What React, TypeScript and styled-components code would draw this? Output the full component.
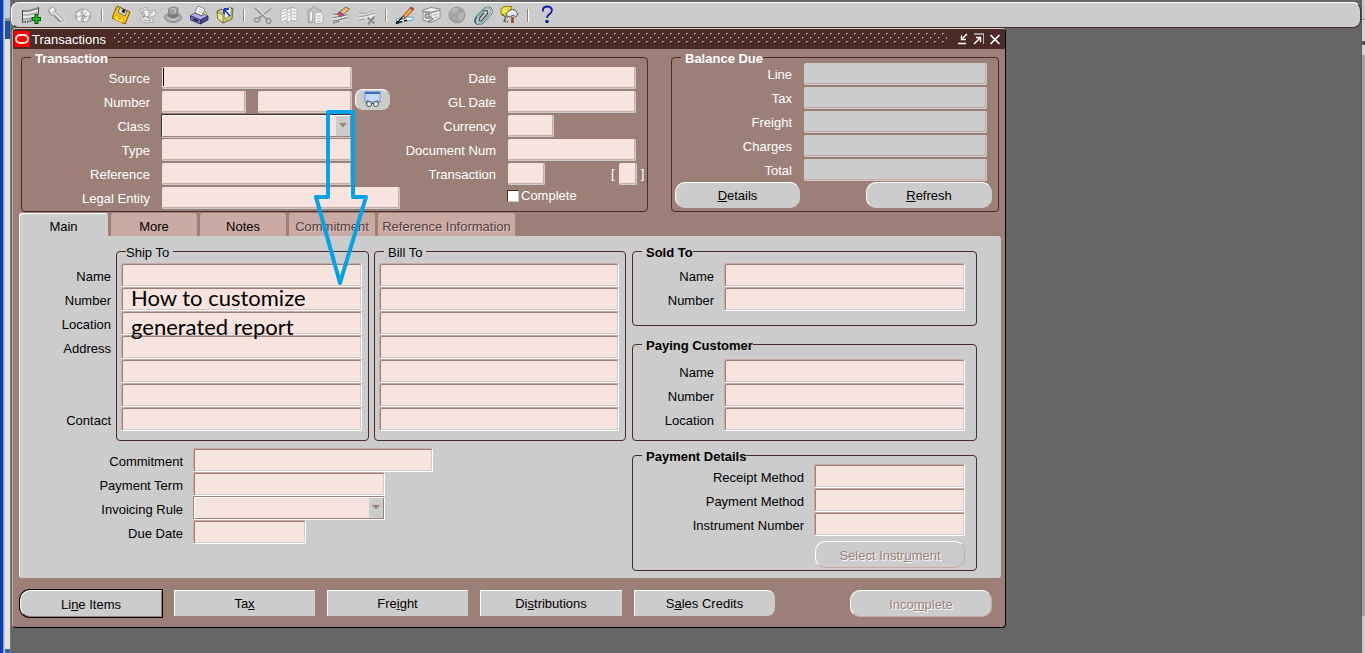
import React from "react";
import styled, { createGlobalStyle, css } from "styled-components";

const c = {
  desk: "#666666",
  brown: "#9c8077",
  dark: "#4a2a25",
  rose: "#ccaaa4",
  pink: "#f8e4de",
  grey: "#cccccc",
};

const GlobalStyle = createGlobalStyle`
  *, *::before, *::after { box-sizing: border-box; }
  body {
    margin: 0;
    background: ${c.desk};
    font: 13px/16px "Liberation Sans", Arial, sans-serif;
    color: #000;
  }
  button, input, select { font: inherit; color: inherit; margin: 0; }
`;

const Desktop = styled.div`
  display: flex;
  min-height: 100vh;
`;

const LeftEdge = styled.div`
  flex: none;
  width: 11px;
  background:
    linear-gradient(90deg, #0a3fb5 3px, #8f9db8 3px 4px, #c4c8d0 4px 5px, transparent 5px 10px, #777 10px),
    linear-gradient(#b9cfe8 18px, #8a9099 18px 21px, #1f4f96 21px 39px, #e4e4e0 39px calc(100% - 4px), #3465a8 calc(100% - 4px));
`;

const RightEdge = styled.div`
  flex: none;
  width: 4px;
  background:
    linear-gradient(90deg, #5c5c5c 1px, transparent 1px),
    linear-gradient(#c8c8c8 19px, #909090 19px 20px, #d2d2d2 20px 41px, #555 41px 45px, #d2d2d2 45px 55px, #a2a2a2 55px calc(100% - 37px), #c8c8c8 calc(100% - 37px));
`;

const Workspace = styled.div`
  flex: 1;
  min-width: 0;
  padding-top: 2px;
`;

const ToolbarBox = styled.div`
  display: flex;
  align-items: center;
  height: 26px;
  padding-left: 6px;
  background: ${c.grey};
  border: 1px solid #fff;
  border-right-color: ${c.dark};
  border-bottom-color: ${c.dark};
  border-radius: 8px;
`;

const ToolButton = styled.button`
  display: flex;
  align-items: center;
  justify-content: center;
  width: 26px;
  height: 24px;
  padding: 0;
  border: 0;
  background: none;

  svg { display: block; width: 20px; height: 20px; }
`;

const Separator = styled.span`
  width: 2px;
  height: 13px;
  margin: 0 5px;
  border-left: 1px solid ${c.brown};
  border-right: 1px solid #fff;
`;

const Window = styled.main`
  position: relative;
  width: 994px;
  max-width: 100%;
  margin-left: 1px;
  background: ${c.brown};
  border: 1px solid #000;
  border-top-color: ${c.grey};
  border-left-color: ${c.rose};
  border-radius: 4px;
`;

const TitleBar = styled.header`
  display: flex;
  align-items: center;
  height: 20px;
  padding: 0 4px 0 1px;
  background: ${c.dark};
  border-radius: 3px 3px 0 0;
  color: #fff;
`;

const Title = styled.h1`
  margin: 0 8px 0 2px;
  padding-top: 2px;
  font-size: 13px;
  font-weight: 400;
`;

const Grip = styled.svg`
  flex: 1;
  height: 12px;
  margin-right: 6px;
`;

const WindowButton = styled.button`
  display: flex;
  padding: 0;
  margin-left: 4px;
  border: 0;
  background: none;
  color: #fff;
`;

const TopArea = styled.div`
  display: flex;
  gap: 23px;
  padding: 3px 6px 0 8px;
  color: #fff;
`;

const Group = styled.fieldset<{ $grow?: number; $basis?: number }>`
  min-width: 0;
  margin: 0;
  padding: 0;
  border: 1px solid ${c.dark};
  border-radius: 4px;
  ${(p) => p.$basis && css`flex: ${p.$grow ?? 0} 1 ${p.$basis}px;`}
`;

const Legend = styled.legend<{ $plain?: boolean; $indent?: number }>`
  height: 11px;
  margin-left: 9px;
  padding: 0 ${(p) => (p.$plain ? 4 : 0)}px 0 ${(p) => p.$indent ?? 4}px;
  font-weight: ${(p) => (p.$plain ? 400 : 700)};
  line-height: 13px;
`;

const Columns = styled.div`
  display: flex;
  padding: 4px 0 2px;
`;

const Stack = styled.div<{ $gap?: number; $pad?: string; $grow?: boolean }>`
  display: flex;
  flex-direction: column;
  gap: ${(p) => p.$gap ?? 0}px;
  padding: ${(p) => p.$pad ?? 0};
  ${(p) => p.$grow && css`flex: 1; min-width: 0;`}
`;

const Row = styled.div<{ $label?: number }>`
  display: flex;
  align-items: center;
  gap: 12px;

  > label:first-child {
    flex: ${(p) => (p.$label ? `0 0 ${p.$label}px` : "1")};
    padding-top: 2px;
    text-align: right;
    white-space: nowrap;
  }
`;

const PanelRow = styled(Row)`
  gap: 10px;

  > label:first-child { padding-top: 4px; }
`;

const Field = styled.input<{ $w?: number; $caret?: boolean; $grey?: boolean }>`
  display: block;
  width: ${(p) => (p.$w ? `${p.$w}px` : "100%")};
  min-width: 0;
  height: 22px;
  padding: 0 3px;
  border: 0 solid ${c.grey};
  border-width: 0 1px 1px 0;
  border-radius: 2px;
  box-shadow: inset -1px -1px ${c.rose};
  outline: 0;
  background: ${(p) =>
    p.$caret
      ? `linear-gradient(#000, #000) 1px 1px / 1px 18px no-repeat ${c.pink}`
      : p.$grey
        ? c.grey
        : c.pink};
`;

const SunkenField = styled(Field)`
  height: 24px;
  border: 1px solid;
  border-color: ${c.rose} #fff #fff ${c.rose};
  box-shadow: inset 1px 1px ${c.brown}, inset -1px -1px ${c.grey};
`;

const SelectBox = styled.span<{ $w: number; $active?: boolean }>`
  position: relative;
  display: block;
  width: ${(p) => p.$w}px;
  margin: ${(p) => (p.$active ? "-1px 0 -1px -1px" : "0")};

  svg {
    position: absolute;
    top: 9px;
    right: 5px;
    pointer-events: none;
  }
`;

const Select = styled.select<{ $active?: boolean }>`
  appearance: none;
  display: block;
  width: 100%;
  height: 24px;
  border: 1px solid;
  border-color: ${(p) => (p.$active ? `${c.dark} ${c.grey} ${c.grey} ${c.dark}` : `${c.brown} #fff #fff ${c.brown}`)};
  border-radius: 2px;
  box-shadow: inset 1px 1px #fff, inset -1px -1px ${c.brown};
  outline: 0;
  background: linear-gradient(90deg, ${c.pink} calc(100% - 15px), ${c.grey} calc(100% - 15px));
`;

const LensButton = styled.button`
  display: flex;
  align-items: center;
  justify-content: center;
  width: 35px;
  height: 21px;
  margin: -6px 0 0 -9px;
  padding: 0;
  border: 1px solid ${c.grey};
  border-top-color: #fff;
  border-left-color: #fff;
  border-radius: 8px;
  background: ${c.grey};
`;

const Check = styled.input`
  appearance: none;
  width: 12px;
  height: 12px;
  background: #fff;
  border: 1px solid ${c.grey};
  border-top-color: ${c.dark};
  border-left-color: ${c.dark};
`;

const CheckRow = styled.div`
  display: flex;
  align-items: center;
  gap: 2px;
  height: 18px;
  margin-left: 107px;
`;

const Status = styled.div`
  display: flex;
  align-items: center;
  gap: 4px;
  margin-left: 54px;
`;

const ButtonRow = styled.div`
  display: flex;
  justify-content: space-between;
  padding: 0 6px 3px 3px;
`;

const PushButton = styled.button<{ $w: number; $shape?: "round" | "left" | "right" | "square"; $default?: boolean }>`
  width: ${(p) => p.$w}px;
  min-width: 0;
  height: ${(p) => (p.$default ? 27 : 26)}px;
  padding: 2px 0 0;
  border: 1px solid ${c.grey};
  border-top-color: #fff;
  border-left-color: #fff;
  border-radius: ${(p) =>
    ({ round: "10px", left: "10px 0 0 10px", right: "0 8px 8px 0", square: "0" })[p.$shape ?? "round"]};
  background: ${c.grey};
  color: #000;
  ${(p) => p.$default && css`box-shadow: 0 0 0 1px #000; border-right-color: ${c.brown}; border-bottom-color: ${c.brown};`}

  &:disabled {
    height: 27px;
    color: ${c.brown};
    text-shadow: 1px 1px #fff;
    border-right-color: ${c.rose};
    border-bottom-color: ${c.rose};
  }
`;

const Tabs = styled.div`
  display: flex;
  gap: 3px;
  padding: 1px 0 0 6px;
`;

const Tab = styled.button<{ $w: number; $active?: boolean }>`
  width: ${(p) => p.$w}px;
  height: 23px;
  padding: 4px 0 0;
  border: 0;
  border-radius: 3px 3px 0 0;
  background: ${(p) => (p.$active ? c.grey : c.rose)};
  ${(p) => p.$active && css`box-shadow: inset 1px 1px #fff;`}
  line-height: 16px;
  white-space: nowrap;

  &:disabled {
    color: #5c3a34;
    text-shadow: 1px 1px ${c.grey};
  }
`;

const Panel = styled.section`
  display: flex;
  gap: 6px;
  margin: 0 4px 0 6px;
  padding: 10px 24px 7px 0;
  background: ${c.grey};
  border-left: 1px solid #fff;
  border-radius: 0 3px 3px 3px;
`;

const Addresses = styled.div`
  display: flex;
  gap: 5px;
`;

const AddressLabels = styled.div`
  display: grid;
  grid-auto-rows: 24px;
  width: 91px;
  padding-top: 19px;
  align-items: center;
  text-align: right;
`;

const Footer = styled.footer`
  display: flex;
  gap: 12px;
  padding: 12px 13px 10px 7px;

  > :last-child { margin-left: auto; }
`;

const Arrow = styled.svg`
  position: absolute;
  left: 300px;
  top: 80px;
  pointer-events: none;
`;

const Note = styled.p`
  position: absolute;
  left: 118px;
  top: 254px;
  margin: 0;
  font: 22px/29px Lato, sans-serif;
  pointer-events: none;
`;

const SideColumn = styled.div`
  flex: 0 1 345px;
  display: flex;
  flex-direction: column;
`;

const Spacer = styled.div<{ $h: number }>`
  height: ${(p) => p.$h}px;
`;

const InstrumentRow = styled.div`
  display: flex;
  justify-content: flex-end;
  padding-top: 5px;
`;

const DownMark = () => (
  <svg width="8" height="5" viewBox="0 0 8 5" aria-hidden="true">
    <path d="M0 0h8L4 4.5z" fill={c.brown} />
  </svg>
);

const icons: Record<string, React.ReactNode> = {
  New: (
    <>
      <path d="M1 5h6l4-1 7-2v10l-6 2-5 1H1z" fill="#e6e6e6" />
      <path d="M1 6h6l4-1 7-2" stroke="#888" strokeWidth="2" fill="none" />
      <path d="M2 10h5l4-1 6-1.500" stroke="#aaa" strokeWidth="1.500" fill="none" />
      <path d="M1 14h6l4-1" stroke="#999" strokeWidth="1.500" fill="none" />
      <path d="M1 17h5l5-1.500" stroke="#333" strokeWidth="1.500" strokeDasharray="1.500 1" fill="none" />
      <path d="M1.500 5v12M17.500 2v7" stroke="#444" />
      <path d="M15.500 9v10M10.500 14h9.500" stroke="#06500a" strokeWidth="4" />
      <path d="M15.500 10v8M11.500 14h7.500" stroke="#15c41c" strokeWidth="2" />
    </>
  ),
  Find: (
    <>
      <path d="M1.500 5l4-3.500L9 4.500l-.5 3 8 7.500-3 3L6 10.500l-3-1z" fill="#d2d2d2" stroke="#969696" />
      <path d="M3 5l3-2.500 1.500 1.500L4 7z" fill="#fafafa" />
      <path d="M7 10l7 7" stroke="#8e8e8e" strokeWidth="1.400" />
      <path d="M8 8.500l7 7" stroke="#f2f2f2" strokeWidth="1.200" />
      <path d="M11 18h6l1-3" stroke="#dedac0" strokeWidth="1.500" fill="none" />
    </>
  ),
  Navigator: (
    <>
      <ellipse cx="10" cy="10.500" rx="8" ry="6.500" fill="#b8b8b8" stroke="#a6a6a6" />
      <path d="M3 9.500L8 5l1 4-3 2zM11 4.500l5 2.500 1 3-5 1-2-2zM4 12.500l5-1-1 5-3-1zM11 12.500l5-1-2 4-3 1z" fill="#f6f6f6" />
      <path d="M7 6l3 4-2 5M13 7l-2 4 2 3" stroke="#9a9a9a" fill="none" />
    </>
  ),
  Save: (
    <>
      <path d="M6 1l13 6-5 12L1 13z" fill="#f9c61c" stroke="#7a5500" />
      <path d="M9 2.500l7 3.500-2 5-7-3.500z" fill="#d8d8d8" stroke="#555" strokeWidth=".8" />
      <path d="M12 4l2.500 1.300-1.400 3-2.500-1.300z" fill="#222" />
      <path d="M5 10l8 4-2 4-8-4z" fill="#ffe63c" stroke="#dd8500" strokeWidth=".8" />
      <path d="M7 13l3 1.500" stroke="#b97a30" />
    </>
  ),
  "Next Step": (
    <>
      <path d="M2 5l7-3 2 4 7-1 1 5-5 2 3 5-8 1-6-4 3-3z" fill="#eee" stroke="#a8a8a8" />
      <path d="M4 6.500l5-2M5 11l5 1 4-3M7 15l6 1M11 8l5-1M8 9l-2 5M12 13l2 3" stroke="#999" fill="none" />
      <circle cx="6" cy="8" r="1.500" fill="#aaa" />
      <circle cx="12" cy="12.500" r="1.500" fill="#aaa" />
    </>
  ),
  "Switch Responsibility": (
    <>
      <ellipse cx="10" cy="12.500" rx="8.500" ry="5" fill="#a6a6a6" stroke="#8a8a8a" />
      <path d="M5.500 4Q10 .5 15 3.500V11q-5 4-9.500 0z" fill="#9a9a9a" stroke="#868686" />
      <path d="M7 5q3-2.500 5-1v4M4 12q6 5.500 12.500 0" stroke="#dadada" fill="none" />
      <path d="M5 8q5 3.500 10 0v3q-5 3.500-10 0z" fill="#7c7c7c" />
    </>
  ),
  Print: (
    <>
      <path d="M9 1l7 3-3 7-7-3z" fill="#fff" stroke="#777" strokeWidth=".8" />
      <path d="M10 4l4 1.500M9 6l4 1.500" stroke="#aaa" strokeWidth=".8" />
      <path d="M1.500 10.500L6 8l6 3 4-2 3 2-7.500 4z" fill="#b4b4e4" stroke="#44447c" strokeWidth=".8" />
      <path d="M1.500 11l10 4v4l-10-4z" fill="#7c7cc4" stroke="#22224c" strokeWidth=".8" />
      <path d="M11.500 15l7.500-4v4l-7.500 4z" fill="#4a4a94" stroke="#22224c" strokeWidth=".8" />
      <path d="M4 14l5 2" stroke="#151540" strokeWidth="1.500" />
      <path d="M14 7l4 1-1 2-3-1z" fill="#ece58a" stroke="#77712c" strokeWidth=".6" />
    </>
  ),
  "Close Form": (
    <>
      <path d="M2 6l5-2 2 2 9-3-1 11-9 4-5-4z" fill="#cfc768" stroke="#716b28" />
      <path d="M2 7l6 3v8l-5-4z" fill="#f0eba4" stroke="#716b28" strokeWidth=".8" />
      <path d="M9 5l7-3v8l-6 4z" fill="#fff" stroke="#555" strokeWidth=".6" />
      <path d="M9 4l6 7M9 4v5M9 4h5" stroke="#1a3bdc" strokeWidth="1.800" fill="none" />
    </>
  ),
  Cut: (
    <>
      <path d="M2 3l12 11M18 3L6 13" stroke="#919191" strokeWidth="1.800" />
      <path d="M3 2.500l11 10M17 3l-9 7" stroke="#f0f0f0" strokeWidth=".8" />
      <ellipse cx="4" cy="15" rx="2.800" ry="2" fill="none" stroke="#919191" strokeWidth="1.300" />
      <ellipse cx="15.500" cy="16" rx="2.300" ry="2.500" fill="none" stroke="#919191" strokeWidth="1.300" />
    </>
  ),
  Copy: (
    <>
      <path d="M2 5l4-2 3 1v12l-3-.5-4 2z" fill="#f4f4f4" stroke="#aaa" strokeWidth=".8" />
      <path d="M8 5l4-2.500 6 1V16l-6-.5L8 18z" fill="#f4f4f4" stroke="#a2a2a2" strokeWidth=".8" />
      <path d="M3.500 7l3-1.500M3.500 10l3-1.500M3.500 13l3-1.500M12 3v12M13.500 6l3 .5M13.500 9l3 .5M13.500 12l3 .5M9.500 7.500l1.500-1M9.500 11l1.500-1" stroke="#b0b0b0" />
    </>
  ),
  Paste: (
    <>
      <path d="M3 5l4-1.500L8 1.500l3 .5 1 2 4 1v4h-5v8l-8 1z" fill="#c2c2c2" stroke="#a0a0a0" strokeWidth=".8" />
      <path d="M4.500 7l3-1v10l-3 1zM10 8l5-1 3 2v9l-8 .5z" fill="#f3f3f3" stroke="#a6a6a6" strokeWidth=".8" />
      <path d="M12 11h4M12 13.500h4M12 16h4" stroke="#bbb" />
    </>
  ),
  "Clear Record": (
    <>
      <path d="M2 8l4 1 11-4v9L6 17l-4 1z" fill="#e4e4e4" />
      <path d="M2 9l4 .5L17 6M2 12.500l4-.5 11-2.500M2 16l5-1 10-2.500" stroke="#6f6f6f" strokeWidth="1.200" fill="none" />
      <path d="M2 18l7-2" stroke="#222" strokeDasharray="1.500 1" />
      <path d="M6 9l9-7 3.500 2L10 12z" fill="#f0ba70" stroke="#6a4a20" strokeWidth=".8" />
      <path d="M6 9l2-1.500 4 3L10 12z" fill="#e2485c" />
      <path d="M8.500 7l4 3" stroke="#3b49b0" strokeWidth="1.400" />
    </>
  ),
  Delete: (
    <>
      <path d="M2 7l5 .5L18 4v8L7 15l-5 .5z" fill="#e8e8e8" />
      <path d="M2 8l5 .5L18 5M2 11.500l5-.5 11-3M2 15l6-1" stroke="#a6a6a6" strokeWidth="1.300" fill="none" />
      <path d="M10.500 12.500l7 6M17.500 11.500l-6.500 8" stroke="#8c8c8c" strokeWidth="2" />
    </>
  ),
  "Edit Field": (
    <>
      <path d="M1 14l7-2 10 0v3l-9 1-7 2z" fill="#fff" stroke="#58a6c8" />
      <path d="M1 18l7-6M1 18.500l6-2M9 15.500h3" stroke="#111" strokeWidth="1.400" />
      <path d="M8 11l8-9 3 2-8.500 9z" fill="#f5a843" stroke="#6e3a06" strokeWidth=".8" />
      <path d="M15 2.500l3 2.500" stroke="#c94038" strokeWidth="1.800" />
      <path d="M6.500 14.500L8 11l2.500 2z" fill="#fff3cf" stroke="#111" strokeWidth=".7" />
    </>
  ),
  Zoom: (
    <>
      <path d="M2 5l8-2.500L19 4v9l-9 4.500L2 15z" fill="#f1f1f1" stroke="#8a8a8a" />
      <path d="M2 6.500l8 1L19 5" stroke="#999" strokeWidth="1.800" fill="none" />
      <path d="M10 8v9" stroke="#aaa" />
      <path d="M9 9H5q-2 2 0 4h3v-2l4 3-4 3v-2" stroke="#8a8a8a" strokeWidth="1.300" fill="#c8c8c8" />
      <path d="M12 10.500l5-1.500M13 13l4-1.500" stroke="#aaa" />
    </>
  ),
  Translations: (
    <>
      <circle cx="10" cy="10" r="8" fill="#a2a2a2" stroke="#989898" />
      <path d="M5 5q3-3 6-1.500L10 7l-4 2zM12 9l4.500-2 .5 5-3.500 4-2-3zM5 12l3-.5.500 4z" fill="#b6b6b6" />
      <path d="M3 8q1-4 5-5" stroke="#c0c0c0" fill="none" />
    </>
  ),
  Attachments: (
    <>
      <path d="M4 12l7.500-8q3.500-3 6-.5t.5 5.500l-7.500 8q-4 3.500-7 1.500t0-6.500l7-7.500" fill="none" stroke="#2f6f74" strokeWidth="1.800" />
      <path d="M4 12l7.500-8q3.500-3 6-.5t.5 5.500l-7.500 8q-4 3.500-7 1.500" fill="none" stroke="#e6f8f8" strokeWidth=".8" />
      <path d="M10.500 6.500q3-2 4 0t-1 3.500l-5 5.500q-2 1-2.500-.5t5-7" fill="none" stroke="#33464a" strokeWidth="1.100" />
    </>
  ),
  "Folder Tools": (
    <>
      <path d="M2 4l3-2.500h8L11 6l3 3-6 3-6-3z" fill="#e6dd22" stroke="#77700c" strokeWidth=".8" />
      <path d="M4 4.500l5-1.500M4 7l4-1" stroke="#fffbb0" />
      <path d="M3 9.500l4 3-2 3.500 4 1" stroke="#555" strokeWidth="1.500" fill="none" strokeDasharray="2 1" />
      <path d="M7 9q4-6 9-4l3 4-2 3-3-2-3 2-3-1z" fill="#e2e2e2" stroke="#4a4a4a" strokeWidth=".9" />
      <path d="M9 9l4-3 3 1" stroke="#fff" strokeWidth="1.200" fill="none" />
      <path d="M13.500 12v6" stroke="#9c5420" strokeWidth="2.800" />
    </>
  ),
  Help: (
    <>
      <path d="M6 6.500V4q1-2.500 4.500-2.500T15 5q0 2.500-3 4.500-2 1.500-2 3.500" fill="none" stroke="#1717b4" strokeWidth="1.800" />
      <circle cx="10" cy="16.500" r="1.800" fill="#1717b4" />
    </>
  ),
};

const toolGroups = [
  ["New", "Find", "Navigator"],
  ["Save", "Next Step", "Switch Responsibility", "Print", "Close Form"],
  ["Cut", "Copy", "Paste", "Clear Record", "Delete"],
  ["Edit Field", "Zoom", "Translations", "Attachments", "Folder Tools"],
  ["Help"],
];

const Toolbar = () => (
  <ToolbarBox role="toolbar" aria-label="Forms toolbar">
    {toolGroups.map((group, i) => (
      <React.Fragment key={group[0]}>
        {i > 0 && <Separator />}
        {group.map((name) => (
          <ToolButton key={name} type="button" aria-label={name}>
            <svg viewBox="0 0 20 20" aria-hidden="true">{icons[name]}</svg>
          </ToolButton>
        ))}
      </React.Fragment>
    ))}
  </ToolbarBox>
);

const WindowTitle = () => (
  <TitleBar>
    <svg width="16" height="16" viewBox="0 0 16 16" aria-hidden="true">
      <rect width="16" height="16" fill="#f00" />
      <rect x="2" y="4" width="12" height="8" rx="4" fill="none" stroke="#fbdcd5" strokeWidth="2" />
    </svg>
    <Title>Transactions</Title>
    <Grip aria-hidden="true">
      <defs>
        <pattern id="grip" width="8" height="8" patternUnits="userSpaceOnUse">
          <path d="M5 1h1v1H5zM1 5h1v1H1z" fill="#000" />
          <path d="M4 0h2v1H4zM4 0h1v2H4zM0 4h2v1H0zM0 4h1v2H0z" fill="#b8988f" />
        </pattern>
      </defs>
      <rect width="100%" height="11" fill="url(#grip)" />
    </Grip>
    <WindowButton type="button" aria-label="Minimize">
      <svg width="12" height="12" viewBox="0 0 12 12" fill="none" stroke="currentColor">
        <path d="M10 1L5.500 5.500" strokeWidth="1.400" />
        <path d="M4.500 2.500v4H9M1 10.500h8" strokeWidth="1.400" />
      </svg>
    </WindowButton>
    <WindowButton type="button" aria-label="Restore">
      <svg width="12" height="12" viewBox="0 0 12 12" fill="none" stroke="currentColor">
        <path d="M1 11l6-6M3 4.500h4.500V9" strokeWidth="1.400" />
        <path d="M1 1h10" />
        <path d="M10.500 1v10" opacity=".6" />
      </svg>
    </WindowButton>
    <WindowButton type="button" aria-label="Close">
      <svg width="12" height="12" viewBox="0 0 12 12" fill="none" stroke="currentColor" strokeWidth="1.600">
        <path d="M1.500 2l9 9M10.500 2l-9 9" />
      </svg>
    </WindowButton>
  </TitleBar>
);

const TransactionGroup = () => (
  <Group $basis={627} $grow={1}>
    <Legend>Transaction</Legend>
    <Columns>
      <Stack $gap={2}>
        <Row $label={128}>
          <label htmlFor="source">Source</label>
          <Field id="source" $w={190} $caret />
        </Row>
        <Row $label={128}>
          <label htmlFor="number">Number</label>
          <Field id="number" $w={84} />
          <Field aria-label="Document sequence" $w={94} />
          <LensButton type="button" aria-label="View details">
            <svg width="17" height="17" viewBox="0 0 17 17" aria-hidden="true">
              <rect x="1" y="1" width="15" height="10" fill="#c5d9fb" stroke="#6d93dc" />
              <rect x="1" y="1" width="15" height="2" fill="#3c68cc" />
              <circle cx="5" cy="13" r="2.500" fill="#e4e9f3" stroke="#555" />
              <circle cx="12" cy="13" r="2.500" fill="#e4e9f3" stroke="#555" />
              <path d="M7 12.500h3M2.500 12L4 9M14.500 12L13 9" stroke="#555" />
            </svg>
          </LensButton>
        </Row>
        <Row $label={128}>
          <label htmlFor="class">Class</label>
          <SelectBox $w={191} $active>
            <Select id="class" $active />
            <DownMark />
          </SelectBox>
        </Row>
        <Row $label={128}>
          <label htmlFor="type">Type</label>
          <Field id="type" $w={190} />
        </Row>
        <Row $label={128}>
          <label htmlFor="reference">Reference</label>
          <Field id="reference" $w={190} />
        </Row>
        <Row $label={128}>
          <label htmlFor="entity">Legal Entity</label>
          <Field id="entity" $w={238} />
        </Row>
      </Stack>
      <Stack $gap={2}>
        <Row $label={96}>
          <label htmlFor="date">Date</label>
          <Field id="date" $w={128} />
        </Row>
        <Row $label={96}>
          <label htmlFor="gldate">GL Date</label>
          <Field id="gldate" $w={128} />
        </Row>
        <Row $label={96}>
          <label htmlFor="currency">Currency</label>
          <Field id="currency" $w={46} />
        </Row>
        <Row $label={96}>
          <label htmlFor="docnum">Document Num</label>
          <Field id="docnum" $w={128} />
        </Row>
        <Row $label={96}>
          <label htmlFor="trx">Transaction</label>
          <Field id="trx" $w={37} />
          <Status>
            <span>[</span>
            <Field aria-label="Transaction flag" $w={18} />
            <span>]</span>
          </Status>
        </Row>
        <CheckRow>
          <Check type="checkbox" id="complete" />
          <label htmlFor="complete">Complete</label>
        </CheckRow>
      </Stack>
    </Columns>
  </Group>
);

const BalanceGroup = () => (
  <Group $basis={328}>
    <Legend>Balance Due</Legend>
    <Stack $gap={2} $pad="0 11px 1px 0">
      {["Line", "Tax", "Freight", "Charges", "Total"].map((name) => (
        <Row key={name}>
          <label htmlFor={`due-${name}`}>{name}</label>
          <Field id={`due-${name}`} $w={183} $grey readOnly />
        </Row>
      ))}
    </Stack>
    <ButtonRow>
      <PushButton type="button" $w={125}><u>D</u>etails</PushButton>
      <PushButton type="button" $w={126}><u>R</u>efresh</PushButton>
    </ButtonRow>
  </Group>
);

const addressRows = ["Name", "Number", "Location", "Address", "", "", "Contact"];

const AddressGroup = ({ title, prefix, width, indent }: {
  title: string;
  prefix: string;
  width: number;
  indent: number;
}) => (
  <Group $basis={width} $grow={1}>
    <Legend $plain $indent={indent}>{title}</Legend>
    <Stack $pad="6px 6px 9px 4px">
      {addressRows.map((name, i) => (
        <SunkenField key={i} id={`${prefix}-${i}`} aria-label={`${title} ${name || `Address line ${i - 2}`}`} />
      ))}
    </Stack>
  </Group>
);

const SideGroup = ({ title, rows, pad, width, children }: {
  title: string;
  rows: string[];
  pad: string;
  width: number;
  children?: React.ReactNode;
}) => (
  <Group>
    <Legend>{title}</Legend>
    <Stack $pad={pad}>
      {rows.map((name) => (
        <PanelRow key={name}>
          <label htmlFor={`${title}-${name}`}>{name}</label>
          <SunkenField id={`${title}-${name}`} $w={width} />
        </PanelRow>
      ))}
      {children}
    </Stack>
  </Group>
);

const MainPanel = () => (
  <Panel>
    <Stack $grow $gap={7}>
      <Addresses>
        <AddressLabels>
          {addressRows.map((name, i) => (
            <label key={i} htmlFor={`ship-${i}`}>{name}</label>
          ))}
        </AddressLabels>
        <AddressGroup title="Ship To" prefix="ship" width={253} indent={0} />
        <AddressGroup title="Bill To" prefix="bill" width={252} indent={4} />
      </Addresses>
      <Stack>
        <PanelRow $label={163}>
          <label htmlFor="commitment">Commitment</label>
          <SunkenField id="commitment" $w={240} />
        </PanelRow>
        <PanelRow $label={163}>
          <label htmlFor="term">Payment Term</label>
          <SunkenField id="term" $w={192} />
        </PanelRow>
        <PanelRow $label={163}>
          <label htmlFor="rule">Invoicing Rule</label>
          <SelectBox $w={192}>
            <Select id="rule" />
            <DownMark />
          </SelectBox>
        </PanelRow>
        <PanelRow $label={163}>
          <label htmlFor="due">Due Date</label>
          <SunkenField id="due" $w={113} />
        </PanelRow>
      </Stack>
    </Stack>
    <SideColumn>
      <SideGroup title="Sold To" rows={["Name", "Number"]} pad="6px 11px 14px 0" width={241} />
      <Spacer $h={13} />
      <SideGroup title="Paying Customer" rows={["Name", "Number", "Location"]} pad="9px 11px 9px 0" width={241} />
      <Spacer $h={9} />
      <SideGroup
        title="Payment Details"
        rows={["Receipt Method", "Payment Method", "Instrument Number"]}
        pad="3px 11px 2px 0"
        width={151}
      >
        <InstrumentRow>
          <PushButton type="button" $w={150} disabled>Select Instr<u>u</u>ment</PushButton>
        </InstrumentRow>
      </SideGroup>
    </SideColumn>
  </Panel>
);

export default function App() {
  return (
    <>
      <GlobalStyle />
      <Desktop>
        <LeftEdge />
        <Workspace>
          <Toolbar />
          <Window>
            <WindowTitle />
            <TopArea>
              <TransactionGroup />
              <BalanceGroup />
            </TopArea>
            <Tabs>
              <Tab type="button" $w={89} $active>Main</Tab>
              <Tab type="button" $w={86}>More</Tab>
              <Tab type="button" $w={86}>Notes</Tab>
              <Tab type="button" $w={86} disabled>Commitment</Tab>
              <Tab type="button" $w={137} disabled>Reference Information</Tab>
            </Tabs>
            <MainPanel />
            <Footer>
              <PushButton type="button" $w={142} $shape="left" $default>Li<u>n</u>e Items</PushButton>
              <PushButton type="button" $w={141} $shape="square">Ta<u>x</u></PushButton>
              <PushButton type="button" $w={141} $shape="square">Fre<u>i</u>ght</PushButton>
              <PushButton type="button" $w={142} $shape="square">Di<u>s</u>tributions</PushButton>
              <PushButton type="button" $w={141} $shape="right">S<u>a</u>les Credits</PushButton>
              <PushButton type="button" $w={142} disabled>Inco<u>m</u>plete</PushButton>
            </Footer>
            <Arrow width="60" height="182" viewBox="0 0 60 182" aria-hidden="true">
              <path d="M15 3h25v85h13L27 174 3 88h12z" fill="none" stroke="#00a2e8" strokeWidth="4" strokeLinejoin="round" />
            </Arrow>
            <Note>How to customize<br />generated report</Note>
          </Window>
        </Workspace>
        <RightEdge />
      </Desktop>
    </>
  );
}
